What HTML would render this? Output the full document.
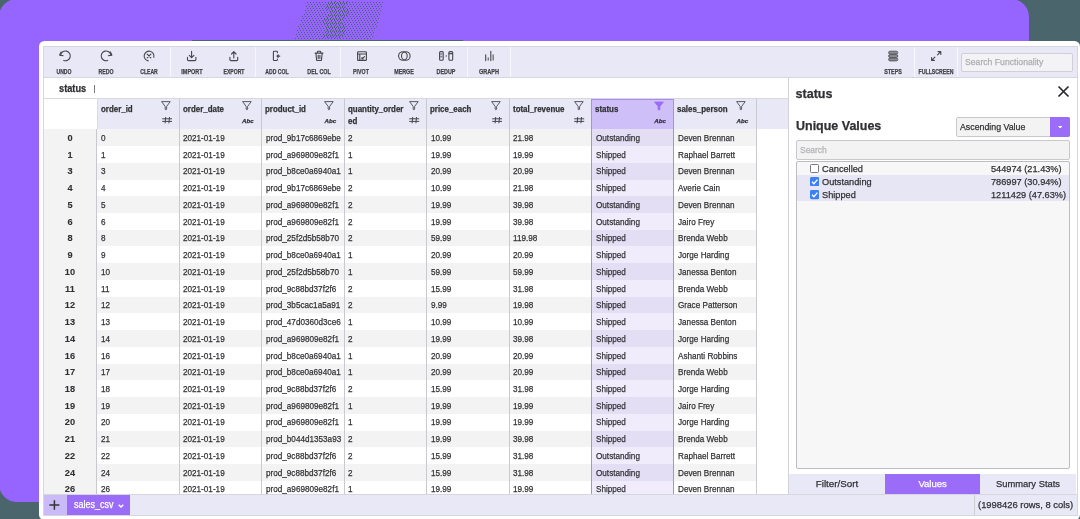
<!DOCTYPE html><html><head><meta charset="utf-8"><style>
*{margin:0;padding:0;box-sizing:border-box}
html,body{width:1080px;height:519px;overflow:hidden;background:#4a656c;font-family:"Liberation Sans",sans-serif;color:#303034}
.a{position:absolute}
.t{position:absolute;white-space:nowrap;transform-origin:0 0;-webkit-text-stroke:0.25px currentColor}
</style></head><body><div style="position:absolute;left:0;top:0;width:1080px;height:519px;overflow:hidden;will-change:transform"><div class="a" style="left:-1px;top:-1px;width:1029.7px;height:502.6px;border-radius:18px;background:#9664ff"></div>
<svg class="a" style="left:285.00px;top:0.00px" width="105" height="42" viewBox="0 0 105 42"><defs><pattern id="dots" x="0" y="0" width="6" height="6" patternUnits="userSpaceOnUse"><g fill="#4a656c"><rect x="0" y="0" width="1" height="1"/><rect x="3" y="0" width="1" height="1"/><rect x="1" y="2" width="1" height="1"/><rect x="4" y="2" width="1" height="1"/><rect x="2" y="4" width="1" height="1"/><rect x="5" y="4" width="1" height="1"/></g></pattern><pattern id="dots2" x="0" y="0" width="4" height="4" patternUnits="userSpaceOnUse"><g fill="#4a656c"><rect x="2" y="1" width="1" height="1"/><rect x="1" y="3" width="1" height="1"/><rect x="3" y="3" width="1" height="1"/></g></pattern></defs><path d="M10 39 L12 30 L18 14 L23 1 L99 1 L96 12 L92 26 L87 39 Z" fill="url(#dots)" shape-rendering="crispEdges"/><path d="M36 39 L42 30 L37 22 L44 12 L40 6 L45 0 L66 0 L60 6 L65 12 L57 22 L62 30 L56 39 Z" fill="url(#dots2)" shape-rendering="crispEdges"/></svg>
<div class="a" style="left:192.00px;top:40.00px;width:271.00px;height:1.00px;background:#4a656c"></div>
<div class="a" style="left:39.2px;top:41px;width:1041.3px;height:479px;border-radius:5.5px;background:#fff"></div>
<div class="a" style="left:43.00px;top:46.00px;width:1034.50px;height:469.80px;background:#fff;border:1px solid #d6d6de"></div>
<div class="a" style="left:44.00px;top:47.00px;width:1032.50px;height:30.70px;background:#e8e8f6"></div>
<div class="a" style="left:44.00px;top:77.20px;width:1032.50px;height:1.00px;background:#d6d6de"></div>
<svg class="a" style="left:0;top:0" width="1080" height="80" viewBox="0 0 1080 80"><path d="M60.67 55.01 A4.85 4.85 0 1 1 63.79 60.41" fill="none" stroke="#46464c" stroke-width="1.1" stroke-linecap="round" stroke-linejoin="round"/><path d="M61.1 51.9 L59.6 55.1 L63.2 55.7" fill="none" stroke="#46464c" stroke-width="1.1" stroke-linecap="round" stroke-linejoin="round"/><path d="M110.83 55.01 A4.85 4.85 0 1 0 107.71 60.41" fill="none" stroke="#46464c" stroke-width="1.1" stroke-linecap="round" stroke-linejoin="round"/><path d="M110.4 51.9 L111.9 55.1 L108.3 55.7" fill="none" stroke="#46464c" stroke-width="1.1" stroke-linecap="round" stroke-linejoin="round"/><path d="M153.78 57.32 A4.9 4.9 0 1 0 148.2 60.88" fill="none" stroke="#46464c" stroke-width="1.1" stroke-linecap="round" stroke-linejoin="round"/><path d="M147.2 54.2 L150.9 57.9 M150.9 54.2 L147.2 57.9" fill="none" stroke="#46464c" stroke-width="1.1" stroke-linecap="round" stroke-linejoin="round"/><path d="M191.6 51.4 V57.7 M189.3 55.4 L191.6 57.7 L193.9 55.4 M187.5 57.2 V59.6 Q187.5 60.6 188.5 60.6 H194.9 Q195.9 60.6 195.9 59.6 V57.2" fill="none" stroke="#46464c" stroke-width="1.1" stroke-linecap="round" stroke-linejoin="round"/><path d="M233.8 51.8 V58 M231.5 54 L233.8 51.6 L236.1 54 M229.9 57.2 V59.6 Q229.9 60.6 230.9 60.6 H236.7 Q237.7 60.6 237.7 59.6 V57.2" fill="none" stroke="#46464c" stroke-width="1.1" stroke-linecap="round" stroke-linejoin="round"/><path d="M277.4 52.8 V52 Q277.4 51.3 276.7 51.3 H274.1 Q273.4 51.3 273.4 52 V59.8 Q273.4 60.5 274.1 60.5 H276.7 Q277.4 60.5 277.4 59.8 V59" fill="none" stroke="#46464c" stroke-width="1.1" stroke-linecap="round" stroke-linejoin="round"/><path d="M276.9 56.1 H279.8 M278.2 54.8 L276.9 56.1 L278.2 57.4" fill="none" stroke="#46464c" stroke-width="1.1" stroke-linecap="round" stroke-linejoin="round"/><path d="M315.1 53.1 H323 M317.4 53.1 V52 Q317.4 51.3 318.1 51.3 H320 Q320.7 51.3 320.7 52 V53.1 M315.9 53.1 L316.6 59.8 Q316.7 60.5 317.4 60.5 H320.7 Q321.4 60.5 321.5 59.8 L322.2 53.1 M318.2 55.2 V58.6 M319.9 55.2 V58.6" fill="none" stroke="#46464c" stroke-width="1.1" stroke-linecap="round" stroke-linejoin="round"/><rect x="357.6" y="51.8" width="8.8" height="8.6" rx="0.7" fill="none" stroke="#46464c" stroke-width="1.1" stroke-linecap="round" stroke-linejoin="round"/><path d="M357.6 54 H366.4 M359.8 54 V60.4 M361.9 59 L364.5 56.6 M361.9 57.6 V59 H363.3" fill="none" stroke="#46464c" stroke-width="1.1" stroke-linecap="round" stroke-linejoin="round"/><circle cx="402.9" cy="56" r="4.3" fill="none" stroke="#46464c" stroke-width="1.1" stroke-linecap="round" stroke-linejoin="round"/><circle cx="405.8" cy="56" r="4.3" fill="none" stroke="#46464c" stroke-width="1.1" stroke-linecap="round" stroke-linejoin="round"/><rect x="439.6" y="51.6" width="3.6" height="8.7" rx="1" fill="none" stroke="#46464c" stroke-width="1.1" stroke-linecap="round" stroke-linejoin="round"/><path d="M440 54 H442.8 M440 56.6 H442.8" stroke="#8a8a90" stroke-width="1.6"/><circle cx="446.2" cy="56" r="0.7" fill="#46464c"/><rect x="448.9" y="51.6" width="3.8" height="8.7" rx="1" fill="none" stroke="#46464c" stroke-width="1.1" stroke-linecap="round" stroke-linejoin="round"/><path d="M449.2 53.6 H452.4" fill="none" stroke="#46464c" stroke-width="1.1" stroke-linecap="round" stroke-linejoin="round"/><path d="M485.7 54.8 V60.6 M490.8 51.3 V60.6" fill="none" stroke="#46464c" stroke-width="1.1" stroke-linecap="round" stroke-linejoin="round"/><path d="M488.3 57.4 V60.6 M493.2 54.6 V60.6" stroke="#7a7a80" stroke-width="1.5" fill="none"/><rect x="888.6" y="51.2" width="9.2" height="2.9" rx="1.45" fill="#8a8a90" stroke="#55555a" stroke-width="0.9"/><rect x="888.6" y="54.6" width="9.2" height="2.9" rx="1.45" fill="#8a8a90" stroke="#55555a" stroke-width="0.9"/><rect x="888.6" y="58" width="9.2" height="2.9" rx="1.45" fill="#8a8a90" stroke="#55555a" stroke-width="0.9"/><path d="M931.6 60.4 L934.9 57.1 M931.6 57.6 V60.4 H934.4 M940.8 51.6 L937.5 54.9 M938 51.6 H940.8 V54.4" fill="none" stroke="#46464c" stroke-width="1.1" stroke-linecap="round" stroke-linejoin="round"/></svg>
<div class="t" style="left:24.15px;top:67.52px;width:80px;text-align:center;font-size:7.3px;line-height:7.3px;transform-origin:50% 0;font-weight:bold;color:#404046;transform:scaleX(0.7)">UNDO</div>
<div class="t" style="left:66.45px;top:67.52px;width:80px;text-align:center;font-size:7.3px;line-height:7.3px;transform-origin:50% 0;font-weight:bold;color:#404046;transform:scaleX(0.71)">REDO</div>
<div class="t" style="left:108.95px;top:67.52px;width:80px;text-align:center;font-size:7.3px;line-height:7.3px;transform-origin:50% 0;font-weight:bold;color:#404046;transform:scaleX(0.7)">CLEAR</div>
<div class="t" style="left:151.65px;top:67.52px;width:80px;text-align:center;font-size:7.3px;line-height:7.3px;transform-origin:50% 0;font-weight:bold;color:#404046;transform:scaleX(0.75)">IMPORT</div>
<div class="t" style="left:194.25px;top:67.52px;width:80px;text-align:center;font-size:7.3px;line-height:7.3px;transform-origin:50% 0;font-weight:bold;color:#404046;transform:scaleX(0.7)">EXPORT</div>
<div class="t" style="left:236.75px;top:67.52px;width:80px;text-align:center;font-size:7.3px;line-height:7.3px;transform-origin:50% 0;font-weight:bold;color:#404046;transform:scaleX(0.705)">ADD COL</div>
<div class="t" style="left:279.10px;top:67.52px;width:80px;text-align:center;font-size:7.3px;line-height:7.3px;transform-origin:50% 0;font-weight:bold;color:#404046;transform:scaleX(0.73)">DEL COL</div>
<div class="t" style="left:321.40px;top:67.52px;width:80px;text-align:center;font-size:7.3px;line-height:7.3px;transform-origin:50% 0;font-weight:bold;color:#404046;transform:scaleX(0.72)">PIVOT</div>
<div class="t" style="left:363.80px;top:67.52px;width:80px;text-align:center;font-size:7.3px;line-height:7.3px;transform-origin:50% 0;font-weight:bold;color:#404046;transform:scaleX(0.735)">MERGE</div>
<div class="t" style="left:406.25px;top:67.52px;width:80px;text-align:center;font-size:7.3px;line-height:7.3px;transform-origin:50% 0;font-weight:bold;color:#404046;transform:scaleX(0.735)">DEDUP</div>
<div class="t" style="left:449.05px;top:67.52px;width:80px;text-align:center;font-size:7.3px;line-height:7.3px;transform-origin:50% 0;font-weight:bold;color:#404046;transform:scaleX(0.76)">GRAPH</div>
<div class="t" style="left:853.20px;top:67.52px;width:80px;text-align:center;font-size:7.3px;line-height:7.3px;transform-origin:50% 0;font-weight:bold;color:#404046;transform:scaleX(0.74)">STEPS</div>
<div class="t" style="left:895.95px;top:67.52px;width:80px;text-align:center;font-size:7.3px;line-height:7.3px;transform-origin:50% 0;font-weight:bold;color:#404046;transform:scaleX(0.712)">FULLSCREEN</div>
<div class="a" style="left:169.80px;top:47.00px;width:1.00px;height:30.20px;background:#f8f8fc"></div>
<div class="a" style="left:255.00px;top:47.00px;width:1.00px;height:30.20px;background:#f8f8fc"></div>
<div class="a" style="left:339.70px;top:47.00px;width:1.00px;height:30.20px;background:#f8f8fc"></div>
<div class="a" style="left:467.00px;top:47.00px;width:1.00px;height:30.20px;background:#f8f8fc"></div>
<div class="a" style="left:510.10px;top:47.00px;width:1.00px;height:30.20px;background:#f8f8fc"></div>
<div class="a" style="left:913.90px;top:47.00px;width:1.00px;height:30.20px;background:#f8f8fc"></div>
<div class="a" style="left:957.00px;top:47.00px;width:1.00px;height:30.20px;background:#f8f8fc"></div>
<div class="a" style="left:961.30px;top:52.50px;width:111.50px;height:19.30px;background:#f3f3f5;border:1px solid #cfcfd4;border-radius:2px"></div>
<div class="t" style="left:964.60px;top:57.26px;font-size:9.5px;line-height:9.5px;color:#acacb0;transform:scaleX(0.91)">Search Functionality</div>
<div class="t" style="left:58.70px;top:82.89px;font-size:11px;line-height:11px;font-weight:bold;transform:scaleX(0.84)">status</div>
<div class="a" style="left:93.60px;top:85.00px;width:1.00px;height:8.00px;background:#7a7a7e"></div>
<div class="a" style="left:44.00px;top:98.30px;width:744.20px;height:1.00px;background:#d8d8de"></div>
<div class="a" style="left:97.00px;top:99.30px;width:691.20px;height:30.00px;background:#e8e8f6"></div>
<div class="a" style="left:44.00px;top:129.30px;width:53.00px;height:16.74px;background:#f3f3f3"></div>
<div class="a" style="left:97.00px;top:129.30px;width:82.30px;height:16.74px;background:#f3f3f3"></div>
<div class="a" style="left:179.30px;top:129.30px;width:82.40px;height:16.74px;background:#f3f3f3"></div>
<div class="a" style="left:261.70px;top:129.30px;width:82.50px;height:16.74px;background:#f3f3f3"></div>
<div class="a" style="left:344.20px;top:129.30px;width:82.50px;height:16.74px;background:#f3f3f3"></div>
<div class="a" style="left:426.70px;top:129.30px;width:82.50px;height:16.74px;background:#f3f3f3"></div>
<div class="a" style="left:509.20px;top:129.30px;width:82.40px;height:16.74px;background:#f3f3f3"></div>
<div class="a" style="left:591.60px;top:129.30px;width:82.20px;height:16.74px;background:#e3def4"></div>
<div class="a" style="left:673.80px;top:129.30px;width:82.40px;height:16.74px;background:#f3f3f3"></div>
<div class="a" style="left:44.00px;top:146.04px;width:53.00px;height:16.74px;background:#f3f3f3"></div>
<div class="a" style="left:97.00px;top:146.04px;width:82.30px;height:16.74px;background:#ffffff"></div>
<div class="a" style="left:179.30px;top:146.04px;width:82.40px;height:16.74px;background:#ffffff"></div>
<div class="a" style="left:261.70px;top:146.04px;width:82.50px;height:16.74px;background:#ffffff"></div>
<div class="a" style="left:344.20px;top:146.04px;width:82.50px;height:16.74px;background:#ffffff"></div>
<div class="a" style="left:426.70px;top:146.04px;width:82.50px;height:16.74px;background:#ffffff"></div>
<div class="a" style="left:509.20px;top:146.04px;width:82.40px;height:16.74px;background:#ffffff"></div>
<div class="a" style="left:591.60px;top:146.04px;width:82.20px;height:16.74px;background:#f0ecfb"></div>
<div class="a" style="left:673.80px;top:146.04px;width:82.40px;height:16.74px;background:#ffffff"></div>
<div class="a" style="left:44.00px;top:162.78px;width:53.00px;height:16.74px;background:#f3f3f3"></div>
<div class="a" style="left:97.00px;top:162.78px;width:82.30px;height:16.74px;background:#f3f3f3"></div>
<div class="a" style="left:179.30px;top:162.78px;width:82.40px;height:16.74px;background:#f3f3f3"></div>
<div class="a" style="left:261.70px;top:162.78px;width:82.50px;height:16.74px;background:#f3f3f3"></div>
<div class="a" style="left:344.20px;top:162.78px;width:82.50px;height:16.74px;background:#f3f3f3"></div>
<div class="a" style="left:426.70px;top:162.78px;width:82.50px;height:16.74px;background:#f3f3f3"></div>
<div class="a" style="left:509.20px;top:162.78px;width:82.40px;height:16.74px;background:#f3f3f3"></div>
<div class="a" style="left:591.60px;top:162.78px;width:82.20px;height:16.74px;background:#e3def4"></div>
<div class="a" style="left:673.80px;top:162.78px;width:82.40px;height:16.74px;background:#f3f3f3"></div>
<div class="a" style="left:44.00px;top:179.52px;width:53.00px;height:16.74px;background:#f3f3f3"></div>
<div class="a" style="left:97.00px;top:179.52px;width:82.30px;height:16.74px;background:#ffffff"></div>
<div class="a" style="left:179.30px;top:179.52px;width:82.40px;height:16.74px;background:#ffffff"></div>
<div class="a" style="left:261.70px;top:179.52px;width:82.50px;height:16.74px;background:#ffffff"></div>
<div class="a" style="left:344.20px;top:179.52px;width:82.50px;height:16.74px;background:#ffffff"></div>
<div class="a" style="left:426.70px;top:179.52px;width:82.50px;height:16.74px;background:#ffffff"></div>
<div class="a" style="left:509.20px;top:179.52px;width:82.40px;height:16.74px;background:#ffffff"></div>
<div class="a" style="left:591.60px;top:179.52px;width:82.20px;height:16.74px;background:#f0ecfb"></div>
<div class="a" style="left:673.80px;top:179.52px;width:82.40px;height:16.74px;background:#ffffff"></div>
<div class="a" style="left:44.00px;top:196.26px;width:53.00px;height:16.74px;background:#f3f3f3"></div>
<div class="a" style="left:97.00px;top:196.26px;width:82.30px;height:16.74px;background:#f3f3f3"></div>
<div class="a" style="left:179.30px;top:196.26px;width:82.40px;height:16.74px;background:#f3f3f3"></div>
<div class="a" style="left:261.70px;top:196.26px;width:82.50px;height:16.74px;background:#f3f3f3"></div>
<div class="a" style="left:344.20px;top:196.26px;width:82.50px;height:16.74px;background:#f3f3f3"></div>
<div class="a" style="left:426.70px;top:196.26px;width:82.50px;height:16.74px;background:#f3f3f3"></div>
<div class="a" style="left:509.20px;top:196.26px;width:82.40px;height:16.74px;background:#f3f3f3"></div>
<div class="a" style="left:591.60px;top:196.26px;width:82.20px;height:16.74px;background:#e3def4"></div>
<div class="a" style="left:673.80px;top:196.26px;width:82.40px;height:16.74px;background:#f3f3f3"></div>
<div class="a" style="left:44.00px;top:213.00px;width:53.00px;height:16.74px;background:#f3f3f3"></div>
<div class="a" style="left:97.00px;top:213.00px;width:82.30px;height:16.74px;background:#ffffff"></div>
<div class="a" style="left:179.30px;top:213.00px;width:82.40px;height:16.74px;background:#ffffff"></div>
<div class="a" style="left:261.70px;top:213.00px;width:82.50px;height:16.74px;background:#ffffff"></div>
<div class="a" style="left:344.20px;top:213.00px;width:82.50px;height:16.74px;background:#ffffff"></div>
<div class="a" style="left:426.70px;top:213.00px;width:82.50px;height:16.74px;background:#ffffff"></div>
<div class="a" style="left:509.20px;top:213.00px;width:82.40px;height:16.74px;background:#ffffff"></div>
<div class="a" style="left:591.60px;top:213.00px;width:82.20px;height:16.74px;background:#f0ecfb"></div>
<div class="a" style="left:673.80px;top:213.00px;width:82.40px;height:16.74px;background:#ffffff"></div>
<div class="a" style="left:44.00px;top:229.74px;width:53.00px;height:16.74px;background:#f3f3f3"></div>
<div class="a" style="left:97.00px;top:229.74px;width:82.30px;height:16.74px;background:#f3f3f3"></div>
<div class="a" style="left:179.30px;top:229.74px;width:82.40px;height:16.74px;background:#f3f3f3"></div>
<div class="a" style="left:261.70px;top:229.74px;width:82.50px;height:16.74px;background:#f3f3f3"></div>
<div class="a" style="left:344.20px;top:229.74px;width:82.50px;height:16.74px;background:#f3f3f3"></div>
<div class="a" style="left:426.70px;top:229.74px;width:82.50px;height:16.74px;background:#f3f3f3"></div>
<div class="a" style="left:509.20px;top:229.74px;width:82.40px;height:16.74px;background:#f3f3f3"></div>
<div class="a" style="left:591.60px;top:229.74px;width:82.20px;height:16.74px;background:#e3def4"></div>
<div class="a" style="left:673.80px;top:229.74px;width:82.40px;height:16.74px;background:#f3f3f3"></div>
<div class="a" style="left:44.00px;top:246.48px;width:53.00px;height:16.74px;background:#f3f3f3"></div>
<div class="a" style="left:97.00px;top:246.48px;width:82.30px;height:16.74px;background:#ffffff"></div>
<div class="a" style="left:179.30px;top:246.48px;width:82.40px;height:16.74px;background:#ffffff"></div>
<div class="a" style="left:261.70px;top:246.48px;width:82.50px;height:16.74px;background:#ffffff"></div>
<div class="a" style="left:344.20px;top:246.48px;width:82.50px;height:16.74px;background:#ffffff"></div>
<div class="a" style="left:426.70px;top:246.48px;width:82.50px;height:16.74px;background:#ffffff"></div>
<div class="a" style="left:509.20px;top:246.48px;width:82.40px;height:16.74px;background:#ffffff"></div>
<div class="a" style="left:591.60px;top:246.48px;width:82.20px;height:16.74px;background:#f0ecfb"></div>
<div class="a" style="left:673.80px;top:246.48px;width:82.40px;height:16.74px;background:#ffffff"></div>
<div class="a" style="left:44.00px;top:263.22px;width:53.00px;height:16.74px;background:#f3f3f3"></div>
<div class="a" style="left:97.00px;top:263.22px;width:82.30px;height:16.74px;background:#f3f3f3"></div>
<div class="a" style="left:179.30px;top:263.22px;width:82.40px;height:16.74px;background:#f3f3f3"></div>
<div class="a" style="left:261.70px;top:263.22px;width:82.50px;height:16.74px;background:#f3f3f3"></div>
<div class="a" style="left:344.20px;top:263.22px;width:82.50px;height:16.74px;background:#f3f3f3"></div>
<div class="a" style="left:426.70px;top:263.22px;width:82.50px;height:16.74px;background:#f3f3f3"></div>
<div class="a" style="left:509.20px;top:263.22px;width:82.40px;height:16.74px;background:#f3f3f3"></div>
<div class="a" style="left:591.60px;top:263.22px;width:82.20px;height:16.74px;background:#e3def4"></div>
<div class="a" style="left:673.80px;top:263.22px;width:82.40px;height:16.74px;background:#f3f3f3"></div>
<div class="a" style="left:44.00px;top:279.96px;width:53.00px;height:16.74px;background:#f3f3f3"></div>
<div class="a" style="left:97.00px;top:279.96px;width:82.30px;height:16.74px;background:#ffffff"></div>
<div class="a" style="left:179.30px;top:279.96px;width:82.40px;height:16.74px;background:#ffffff"></div>
<div class="a" style="left:261.70px;top:279.96px;width:82.50px;height:16.74px;background:#ffffff"></div>
<div class="a" style="left:344.20px;top:279.96px;width:82.50px;height:16.74px;background:#ffffff"></div>
<div class="a" style="left:426.70px;top:279.96px;width:82.50px;height:16.74px;background:#ffffff"></div>
<div class="a" style="left:509.20px;top:279.96px;width:82.40px;height:16.74px;background:#ffffff"></div>
<div class="a" style="left:591.60px;top:279.96px;width:82.20px;height:16.74px;background:#f0ecfb"></div>
<div class="a" style="left:673.80px;top:279.96px;width:82.40px;height:16.74px;background:#ffffff"></div>
<div class="a" style="left:44.00px;top:296.70px;width:53.00px;height:16.74px;background:#f3f3f3"></div>
<div class="a" style="left:97.00px;top:296.70px;width:82.30px;height:16.74px;background:#f3f3f3"></div>
<div class="a" style="left:179.30px;top:296.70px;width:82.40px;height:16.74px;background:#f3f3f3"></div>
<div class="a" style="left:261.70px;top:296.70px;width:82.50px;height:16.74px;background:#f3f3f3"></div>
<div class="a" style="left:344.20px;top:296.70px;width:82.50px;height:16.74px;background:#f3f3f3"></div>
<div class="a" style="left:426.70px;top:296.70px;width:82.50px;height:16.74px;background:#f3f3f3"></div>
<div class="a" style="left:509.20px;top:296.70px;width:82.40px;height:16.74px;background:#f3f3f3"></div>
<div class="a" style="left:591.60px;top:296.70px;width:82.20px;height:16.74px;background:#e3def4"></div>
<div class="a" style="left:673.80px;top:296.70px;width:82.40px;height:16.74px;background:#f3f3f3"></div>
<div class="a" style="left:44.00px;top:313.44px;width:53.00px;height:16.74px;background:#f3f3f3"></div>
<div class="a" style="left:97.00px;top:313.44px;width:82.30px;height:16.74px;background:#ffffff"></div>
<div class="a" style="left:179.30px;top:313.44px;width:82.40px;height:16.74px;background:#ffffff"></div>
<div class="a" style="left:261.70px;top:313.44px;width:82.50px;height:16.74px;background:#ffffff"></div>
<div class="a" style="left:344.20px;top:313.44px;width:82.50px;height:16.74px;background:#ffffff"></div>
<div class="a" style="left:426.70px;top:313.44px;width:82.50px;height:16.74px;background:#ffffff"></div>
<div class="a" style="left:509.20px;top:313.44px;width:82.40px;height:16.74px;background:#ffffff"></div>
<div class="a" style="left:591.60px;top:313.44px;width:82.20px;height:16.74px;background:#f0ecfb"></div>
<div class="a" style="left:673.80px;top:313.44px;width:82.40px;height:16.74px;background:#ffffff"></div>
<div class="a" style="left:44.00px;top:330.18px;width:53.00px;height:16.74px;background:#f3f3f3"></div>
<div class="a" style="left:97.00px;top:330.18px;width:82.30px;height:16.74px;background:#f3f3f3"></div>
<div class="a" style="left:179.30px;top:330.18px;width:82.40px;height:16.74px;background:#f3f3f3"></div>
<div class="a" style="left:261.70px;top:330.18px;width:82.50px;height:16.74px;background:#f3f3f3"></div>
<div class="a" style="left:344.20px;top:330.18px;width:82.50px;height:16.74px;background:#f3f3f3"></div>
<div class="a" style="left:426.70px;top:330.18px;width:82.50px;height:16.74px;background:#f3f3f3"></div>
<div class="a" style="left:509.20px;top:330.18px;width:82.40px;height:16.74px;background:#f3f3f3"></div>
<div class="a" style="left:591.60px;top:330.18px;width:82.20px;height:16.74px;background:#e3def4"></div>
<div class="a" style="left:673.80px;top:330.18px;width:82.40px;height:16.74px;background:#f3f3f3"></div>
<div class="a" style="left:44.00px;top:346.92px;width:53.00px;height:16.74px;background:#f3f3f3"></div>
<div class="a" style="left:97.00px;top:346.92px;width:82.30px;height:16.74px;background:#ffffff"></div>
<div class="a" style="left:179.30px;top:346.92px;width:82.40px;height:16.74px;background:#ffffff"></div>
<div class="a" style="left:261.70px;top:346.92px;width:82.50px;height:16.74px;background:#ffffff"></div>
<div class="a" style="left:344.20px;top:346.92px;width:82.50px;height:16.74px;background:#ffffff"></div>
<div class="a" style="left:426.70px;top:346.92px;width:82.50px;height:16.74px;background:#ffffff"></div>
<div class="a" style="left:509.20px;top:346.92px;width:82.40px;height:16.74px;background:#ffffff"></div>
<div class="a" style="left:591.60px;top:346.92px;width:82.20px;height:16.74px;background:#f0ecfb"></div>
<div class="a" style="left:673.80px;top:346.92px;width:82.40px;height:16.74px;background:#ffffff"></div>
<div class="a" style="left:44.00px;top:363.66px;width:53.00px;height:16.74px;background:#f3f3f3"></div>
<div class="a" style="left:97.00px;top:363.66px;width:82.30px;height:16.74px;background:#f3f3f3"></div>
<div class="a" style="left:179.30px;top:363.66px;width:82.40px;height:16.74px;background:#f3f3f3"></div>
<div class="a" style="left:261.70px;top:363.66px;width:82.50px;height:16.74px;background:#f3f3f3"></div>
<div class="a" style="left:344.20px;top:363.66px;width:82.50px;height:16.74px;background:#f3f3f3"></div>
<div class="a" style="left:426.70px;top:363.66px;width:82.50px;height:16.74px;background:#f3f3f3"></div>
<div class="a" style="left:509.20px;top:363.66px;width:82.40px;height:16.74px;background:#f3f3f3"></div>
<div class="a" style="left:591.60px;top:363.66px;width:82.20px;height:16.74px;background:#e3def4"></div>
<div class="a" style="left:673.80px;top:363.66px;width:82.40px;height:16.74px;background:#f3f3f3"></div>
<div class="a" style="left:44.00px;top:380.40px;width:53.00px;height:16.74px;background:#f3f3f3"></div>
<div class="a" style="left:97.00px;top:380.40px;width:82.30px;height:16.74px;background:#ffffff"></div>
<div class="a" style="left:179.30px;top:380.40px;width:82.40px;height:16.74px;background:#ffffff"></div>
<div class="a" style="left:261.70px;top:380.40px;width:82.50px;height:16.74px;background:#ffffff"></div>
<div class="a" style="left:344.20px;top:380.40px;width:82.50px;height:16.74px;background:#ffffff"></div>
<div class="a" style="left:426.70px;top:380.40px;width:82.50px;height:16.74px;background:#ffffff"></div>
<div class="a" style="left:509.20px;top:380.40px;width:82.40px;height:16.74px;background:#ffffff"></div>
<div class="a" style="left:591.60px;top:380.40px;width:82.20px;height:16.74px;background:#f0ecfb"></div>
<div class="a" style="left:673.80px;top:380.40px;width:82.40px;height:16.74px;background:#ffffff"></div>
<div class="a" style="left:44.00px;top:397.14px;width:53.00px;height:16.74px;background:#f3f3f3"></div>
<div class="a" style="left:97.00px;top:397.14px;width:82.30px;height:16.74px;background:#f3f3f3"></div>
<div class="a" style="left:179.30px;top:397.14px;width:82.40px;height:16.74px;background:#f3f3f3"></div>
<div class="a" style="left:261.70px;top:397.14px;width:82.50px;height:16.74px;background:#f3f3f3"></div>
<div class="a" style="left:344.20px;top:397.14px;width:82.50px;height:16.74px;background:#f3f3f3"></div>
<div class="a" style="left:426.70px;top:397.14px;width:82.50px;height:16.74px;background:#f3f3f3"></div>
<div class="a" style="left:509.20px;top:397.14px;width:82.40px;height:16.74px;background:#f3f3f3"></div>
<div class="a" style="left:591.60px;top:397.14px;width:82.20px;height:16.74px;background:#e3def4"></div>
<div class="a" style="left:673.80px;top:397.14px;width:82.40px;height:16.74px;background:#f3f3f3"></div>
<div class="a" style="left:44.00px;top:413.88px;width:53.00px;height:16.74px;background:#f3f3f3"></div>
<div class="a" style="left:97.00px;top:413.88px;width:82.30px;height:16.74px;background:#ffffff"></div>
<div class="a" style="left:179.30px;top:413.88px;width:82.40px;height:16.74px;background:#ffffff"></div>
<div class="a" style="left:261.70px;top:413.88px;width:82.50px;height:16.74px;background:#ffffff"></div>
<div class="a" style="left:344.20px;top:413.88px;width:82.50px;height:16.74px;background:#ffffff"></div>
<div class="a" style="left:426.70px;top:413.88px;width:82.50px;height:16.74px;background:#ffffff"></div>
<div class="a" style="left:509.20px;top:413.88px;width:82.40px;height:16.74px;background:#ffffff"></div>
<div class="a" style="left:591.60px;top:413.88px;width:82.20px;height:16.74px;background:#f0ecfb"></div>
<div class="a" style="left:673.80px;top:413.88px;width:82.40px;height:16.74px;background:#ffffff"></div>
<div class="a" style="left:44.00px;top:430.62px;width:53.00px;height:16.74px;background:#f3f3f3"></div>
<div class="a" style="left:97.00px;top:430.62px;width:82.30px;height:16.74px;background:#f3f3f3"></div>
<div class="a" style="left:179.30px;top:430.62px;width:82.40px;height:16.74px;background:#f3f3f3"></div>
<div class="a" style="left:261.70px;top:430.62px;width:82.50px;height:16.74px;background:#f3f3f3"></div>
<div class="a" style="left:344.20px;top:430.62px;width:82.50px;height:16.74px;background:#f3f3f3"></div>
<div class="a" style="left:426.70px;top:430.62px;width:82.50px;height:16.74px;background:#f3f3f3"></div>
<div class="a" style="left:509.20px;top:430.62px;width:82.40px;height:16.74px;background:#f3f3f3"></div>
<div class="a" style="left:591.60px;top:430.62px;width:82.20px;height:16.74px;background:#e3def4"></div>
<div class="a" style="left:673.80px;top:430.62px;width:82.40px;height:16.74px;background:#f3f3f3"></div>
<div class="a" style="left:44.00px;top:447.36px;width:53.00px;height:16.74px;background:#f3f3f3"></div>
<div class="a" style="left:97.00px;top:447.36px;width:82.30px;height:16.74px;background:#ffffff"></div>
<div class="a" style="left:179.30px;top:447.36px;width:82.40px;height:16.74px;background:#ffffff"></div>
<div class="a" style="left:261.70px;top:447.36px;width:82.50px;height:16.74px;background:#ffffff"></div>
<div class="a" style="left:344.20px;top:447.36px;width:82.50px;height:16.74px;background:#ffffff"></div>
<div class="a" style="left:426.70px;top:447.36px;width:82.50px;height:16.74px;background:#ffffff"></div>
<div class="a" style="left:509.20px;top:447.36px;width:82.40px;height:16.74px;background:#ffffff"></div>
<div class="a" style="left:591.60px;top:447.36px;width:82.20px;height:16.74px;background:#f0ecfb"></div>
<div class="a" style="left:673.80px;top:447.36px;width:82.40px;height:16.74px;background:#ffffff"></div>
<div class="a" style="left:44.00px;top:464.10px;width:53.00px;height:16.74px;background:#f3f3f3"></div>
<div class="a" style="left:97.00px;top:464.10px;width:82.30px;height:16.74px;background:#f3f3f3"></div>
<div class="a" style="left:179.30px;top:464.10px;width:82.40px;height:16.74px;background:#f3f3f3"></div>
<div class="a" style="left:261.70px;top:464.10px;width:82.50px;height:16.74px;background:#f3f3f3"></div>
<div class="a" style="left:344.20px;top:464.10px;width:82.50px;height:16.74px;background:#f3f3f3"></div>
<div class="a" style="left:426.70px;top:464.10px;width:82.50px;height:16.74px;background:#f3f3f3"></div>
<div class="a" style="left:509.20px;top:464.10px;width:82.40px;height:16.74px;background:#f3f3f3"></div>
<div class="a" style="left:591.60px;top:464.10px;width:82.20px;height:16.74px;background:#e3def4"></div>
<div class="a" style="left:673.80px;top:464.10px;width:82.40px;height:16.74px;background:#f3f3f3"></div>
<div class="a" style="left:44.00px;top:480.84px;width:53.00px;height:13.46px;background:#f3f3f3"></div>
<div class="a" style="left:97.00px;top:480.84px;width:82.30px;height:13.46px;background:#ffffff"></div>
<div class="a" style="left:179.30px;top:480.84px;width:82.40px;height:13.46px;background:#ffffff"></div>
<div class="a" style="left:261.70px;top:480.84px;width:82.50px;height:13.46px;background:#ffffff"></div>
<div class="a" style="left:344.20px;top:480.84px;width:82.50px;height:13.46px;background:#ffffff"></div>
<div class="a" style="left:426.70px;top:480.84px;width:82.50px;height:13.46px;background:#ffffff"></div>
<div class="a" style="left:509.20px;top:480.84px;width:82.40px;height:13.46px;background:#ffffff"></div>
<div class="a" style="left:591.60px;top:480.84px;width:82.20px;height:13.46px;background:#f0ecfb"></div>
<div class="a" style="left:673.80px;top:480.84px;width:82.40px;height:13.46px;background:#ffffff"></div>
<div class="a" style="left:44px;top:129.3px;width:744.2px;height:365.0px;overflow:hidden">
<div class="t" style="left:6.00px;top:3.60px;width:40px;text-align:center;font-size:9.8px;line-height:9.8px;transform-origin:50% 0;font-weight:bold;transform:scaleX(0.94);-webkit-text-stroke:0.1px currentColor">0</div>
<div class="t" style="left:57.00px;top:3.62px;font-size:9.9px;line-height:9.9px;transform:scaleX(0.825)">0</div>
<div class="t" style="left:139.30px;top:3.62px;font-size:9.9px;line-height:9.9px;transform:scaleX(0.825)">2021-01-19</div>
<div class="t" style="left:221.70px;top:3.62px;font-size:9.9px;line-height:9.9px;transform:scaleX(0.825)">prod_9b17c6869ebe</div>
<div class="t" style="left:304.20px;top:3.62px;font-size:9.9px;line-height:9.9px;transform:scaleX(0.825)">2</div>
<div class="t" style="left:386.70px;top:3.62px;font-size:9.9px;line-height:9.9px;transform:scaleX(0.825)">10.99</div>
<div class="t" style="left:469.20px;top:3.62px;font-size:9.9px;line-height:9.9px;transform:scaleX(0.825)">21.98</div>
<div class="t" style="left:551.60px;top:3.62px;font-size:9.9px;line-height:9.9px;transform:scaleX(0.825)">Outstanding</div>
<div class="t" style="left:633.80px;top:3.62px;font-size:9.9px;line-height:9.9px;transform:scaleX(0.825)">Deven Brennan</div>
<div class="t" style="left:6.00px;top:20.34px;width:40px;text-align:center;font-size:9.8px;line-height:9.8px;transform-origin:50% 0;font-weight:bold;transform:scaleX(0.94);-webkit-text-stroke:0.1px currentColor">1</div>
<div class="t" style="left:57.00px;top:20.36px;font-size:9.9px;line-height:9.9px;transform:scaleX(0.825)">1</div>
<div class="t" style="left:139.30px;top:20.36px;font-size:9.9px;line-height:9.9px;transform:scaleX(0.825)">2021-01-19</div>
<div class="t" style="left:221.70px;top:20.36px;font-size:9.9px;line-height:9.9px;transform:scaleX(0.825)">prod_a969809e82f1</div>
<div class="t" style="left:304.20px;top:20.36px;font-size:9.9px;line-height:9.9px;transform:scaleX(0.825)">1</div>
<div class="t" style="left:386.70px;top:20.36px;font-size:9.9px;line-height:9.9px;transform:scaleX(0.825)">19.99</div>
<div class="t" style="left:469.20px;top:20.36px;font-size:9.9px;line-height:9.9px;transform:scaleX(0.825)">19.99</div>
<div class="t" style="left:551.60px;top:20.36px;font-size:9.9px;line-height:9.9px;transform:scaleX(0.825)">Shipped</div>
<div class="t" style="left:633.80px;top:20.36px;font-size:9.9px;line-height:9.9px;transform:scaleX(0.825)">Raphael Barrett</div>
<div class="t" style="left:6.00px;top:37.08px;width:40px;text-align:center;font-size:9.8px;line-height:9.8px;transform-origin:50% 0;font-weight:bold;transform:scaleX(0.94);-webkit-text-stroke:0.1px currentColor">3</div>
<div class="t" style="left:57.00px;top:37.10px;font-size:9.9px;line-height:9.9px;transform:scaleX(0.825)">3</div>
<div class="t" style="left:139.30px;top:37.10px;font-size:9.9px;line-height:9.9px;transform:scaleX(0.825)">2021-01-19</div>
<div class="t" style="left:221.70px;top:37.10px;font-size:9.9px;line-height:9.9px;transform:scaleX(0.825)">prod_b8ce0a6940a1</div>
<div class="t" style="left:304.20px;top:37.10px;font-size:9.9px;line-height:9.9px;transform:scaleX(0.825)">1</div>
<div class="t" style="left:386.70px;top:37.10px;font-size:9.9px;line-height:9.9px;transform:scaleX(0.825)">20.99</div>
<div class="t" style="left:469.20px;top:37.10px;font-size:9.9px;line-height:9.9px;transform:scaleX(0.825)">20.99</div>
<div class="t" style="left:551.60px;top:37.10px;font-size:9.9px;line-height:9.9px;transform:scaleX(0.825)">Shipped</div>
<div class="t" style="left:633.80px;top:37.10px;font-size:9.9px;line-height:9.9px;transform:scaleX(0.825)">Deven Brennan</div>
<div class="t" style="left:6.00px;top:53.82px;width:40px;text-align:center;font-size:9.8px;line-height:9.8px;transform-origin:50% 0;font-weight:bold;transform:scaleX(0.94);-webkit-text-stroke:0.1px currentColor">4</div>
<div class="t" style="left:57.00px;top:53.84px;font-size:9.9px;line-height:9.9px;transform:scaleX(0.825)">4</div>
<div class="t" style="left:139.30px;top:53.84px;font-size:9.9px;line-height:9.9px;transform:scaleX(0.825)">2021-01-19</div>
<div class="t" style="left:221.70px;top:53.84px;font-size:9.9px;line-height:9.9px;transform:scaleX(0.825)">prod_9b17c6869ebe</div>
<div class="t" style="left:304.20px;top:53.84px;font-size:9.9px;line-height:9.9px;transform:scaleX(0.825)">2</div>
<div class="t" style="left:386.70px;top:53.84px;font-size:9.9px;line-height:9.9px;transform:scaleX(0.825)">10.99</div>
<div class="t" style="left:469.20px;top:53.84px;font-size:9.9px;line-height:9.9px;transform:scaleX(0.825)">21.98</div>
<div class="t" style="left:551.60px;top:53.84px;font-size:9.9px;line-height:9.9px;transform:scaleX(0.825)">Shipped</div>
<div class="t" style="left:633.80px;top:53.84px;font-size:9.9px;line-height:9.9px;transform:scaleX(0.825)">Averie Cain</div>
<div class="t" style="left:6.00px;top:70.56px;width:40px;text-align:center;font-size:9.8px;line-height:9.8px;transform-origin:50% 0;font-weight:bold;transform:scaleX(0.94);-webkit-text-stroke:0.1px currentColor">5</div>
<div class="t" style="left:57.00px;top:70.58px;font-size:9.9px;line-height:9.9px;transform:scaleX(0.825)">5</div>
<div class="t" style="left:139.30px;top:70.58px;font-size:9.9px;line-height:9.9px;transform:scaleX(0.825)">2021-01-19</div>
<div class="t" style="left:221.70px;top:70.58px;font-size:9.9px;line-height:9.9px;transform:scaleX(0.825)">prod_a969809e82f1</div>
<div class="t" style="left:304.20px;top:70.58px;font-size:9.9px;line-height:9.9px;transform:scaleX(0.825)">2</div>
<div class="t" style="left:386.70px;top:70.58px;font-size:9.9px;line-height:9.9px;transform:scaleX(0.825)">19.99</div>
<div class="t" style="left:469.20px;top:70.58px;font-size:9.9px;line-height:9.9px;transform:scaleX(0.825)">39.98</div>
<div class="t" style="left:551.60px;top:70.58px;font-size:9.9px;line-height:9.9px;transform:scaleX(0.825)">Outstanding</div>
<div class="t" style="left:633.80px;top:70.58px;font-size:9.9px;line-height:9.9px;transform:scaleX(0.825)">Deven Brennan</div>
<div class="t" style="left:6.00px;top:87.30px;width:40px;text-align:center;font-size:9.8px;line-height:9.8px;transform-origin:50% 0;font-weight:bold;transform:scaleX(0.94);-webkit-text-stroke:0.1px currentColor">6</div>
<div class="t" style="left:57.00px;top:87.32px;font-size:9.9px;line-height:9.9px;transform:scaleX(0.825)">6</div>
<div class="t" style="left:139.30px;top:87.32px;font-size:9.9px;line-height:9.9px;transform:scaleX(0.825)">2021-01-19</div>
<div class="t" style="left:221.70px;top:87.32px;font-size:9.9px;line-height:9.9px;transform:scaleX(0.825)">prod_a969809e82f1</div>
<div class="t" style="left:304.20px;top:87.32px;font-size:9.9px;line-height:9.9px;transform:scaleX(0.825)">2</div>
<div class="t" style="left:386.70px;top:87.32px;font-size:9.9px;line-height:9.9px;transform:scaleX(0.825)">19.99</div>
<div class="t" style="left:469.20px;top:87.32px;font-size:9.9px;line-height:9.9px;transform:scaleX(0.825)">39.98</div>
<div class="t" style="left:551.60px;top:87.32px;font-size:9.9px;line-height:9.9px;transform:scaleX(0.825)">Outstanding</div>
<div class="t" style="left:633.80px;top:87.32px;font-size:9.9px;line-height:9.9px;transform:scaleX(0.825)">Jairo Frey</div>
<div class="t" style="left:6.00px;top:104.04px;width:40px;text-align:center;font-size:9.8px;line-height:9.8px;transform-origin:50% 0;font-weight:bold;transform:scaleX(0.94);-webkit-text-stroke:0.1px currentColor">8</div>
<div class="t" style="left:57.00px;top:104.06px;font-size:9.9px;line-height:9.9px;transform:scaleX(0.825)">8</div>
<div class="t" style="left:139.30px;top:104.06px;font-size:9.9px;line-height:9.9px;transform:scaleX(0.825)">2021-01-19</div>
<div class="t" style="left:221.70px;top:104.06px;font-size:9.9px;line-height:9.9px;transform:scaleX(0.825)">prod_25f2d5b58b70</div>
<div class="t" style="left:304.20px;top:104.06px;font-size:9.9px;line-height:9.9px;transform:scaleX(0.825)">2</div>
<div class="t" style="left:386.70px;top:104.06px;font-size:9.9px;line-height:9.9px;transform:scaleX(0.825)">59.99</div>
<div class="t" style="left:469.20px;top:104.06px;font-size:9.9px;line-height:9.9px;transform:scaleX(0.825)">119.98</div>
<div class="t" style="left:551.60px;top:104.06px;font-size:9.9px;line-height:9.9px;transform:scaleX(0.825)">Shipped</div>
<div class="t" style="left:633.80px;top:104.06px;font-size:9.9px;line-height:9.9px;transform:scaleX(0.825)">Brenda Webb</div>
<div class="t" style="left:6.00px;top:120.78px;width:40px;text-align:center;font-size:9.8px;line-height:9.8px;transform-origin:50% 0;font-weight:bold;transform:scaleX(0.94);-webkit-text-stroke:0.1px currentColor">9</div>
<div class="t" style="left:57.00px;top:120.80px;font-size:9.9px;line-height:9.9px;transform:scaleX(0.825)">9</div>
<div class="t" style="left:139.30px;top:120.80px;font-size:9.9px;line-height:9.9px;transform:scaleX(0.825)">2021-01-19</div>
<div class="t" style="left:221.70px;top:120.80px;font-size:9.9px;line-height:9.9px;transform:scaleX(0.825)">prod_b8ce0a6940a1</div>
<div class="t" style="left:304.20px;top:120.80px;font-size:9.9px;line-height:9.9px;transform:scaleX(0.825)">1</div>
<div class="t" style="left:386.70px;top:120.80px;font-size:9.9px;line-height:9.9px;transform:scaleX(0.825)">20.99</div>
<div class="t" style="left:469.20px;top:120.80px;font-size:9.9px;line-height:9.9px;transform:scaleX(0.825)">20.99</div>
<div class="t" style="left:551.60px;top:120.80px;font-size:9.9px;line-height:9.9px;transform:scaleX(0.825)">Shipped</div>
<div class="t" style="left:633.80px;top:120.80px;font-size:9.9px;line-height:9.9px;transform:scaleX(0.825)">Jorge Harding</div>
<div class="t" style="left:6.00px;top:137.52px;width:40px;text-align:center;font-size:9.8px;line-height:9.8px;transform-origin:50% 0;font-weight:bold;transform:scaleX(0.94);-webkit-text-stroke:0.1px currentColor">10</div>
<div class="t" style="left:57.00px;top:137.54px;font-size:9.9px;line-height:9.9px;transform:scaleX(0.825)">10</div>
<div class="t" style="left:139.30px;top:137.54px;font-size:9.9px;line-height:9.9px;transform:scaleX(0.825)">2021-01-19</div>
<div class="t" style="left:221.70px;top:137.54px;font-size:9.9px;line-height:9.9px;transform:scaleX(0.825)">prod_25f2d5b58b70</div>
<div class="t" style="left:304.20px;top:137.54px;font-size:9.9px;line-height:9.9px;transform:scaleX(0.825)">1</div>
<div class="t" style="left:386.70px;top:137.54px;font-size:9.9px;line-height:9.9px;transform:scaleX(0.825)">59.99</div>
<div class="t" style="left:469.20px;top:137.54px;font-size:9.9px;line-height:9.9px;transform:scaleX(0.825)">59.99</div>
<div class="t" style="left:551.60px;top:137.54px;font-size:9.9px;line-height:9.9px;transform:scaleX(0.825)">Shipped</div>
<div class="t" style="left:633.80px;top:137.54px;font-size:9.9px;line-height:9.9px;transform:scaleX(0.825)">Janessa Benton</div>
<div class="t" style="left:6.00px;top:154.26px;width:40px;text-align:center;font-size:9.8px;line-height:9.8px;transform-origin:50% 0;font-weight:bold;transform:scaleX(0.94);-webkit-text-stroke:0.1px currentColor">11</div>
<div class="t" style="left:57.00px;top:154.28px;font-size:9.9px;line-height:9.9px;transform:scaleX(0.825)">11</div>
<div class="t" style="left:139.30px;top:154.28px;font-size:9.9px;line-height:9.9px;transform:scaleX(0.825)">2021-01-19</div>
<div class="t" style="left:221.70px;top:154.28px;font-size:9.9px;line-height:9.9px;transform:scaleX(0.825)">prod_9c88bd37f2f6</div>
<div class="t" style="left:304.20px;top:154.28px;font-size:9.9px;line-height:9.9px;transform:scaleX(0.825)">2</div>
<div class="t" style="left:386.70px;top:154.28px;font-size:9.9px;line-height:9.9px;transform:scaleX(0.825)">15.99</div>
<div class="t" style="left:469.20px;top:154.28px;font-size:9.9px;line-height:9.9px;transform:scaleX(0.825)">31.98</div>
<div class="t" style="left:551.60px;top:154.28px;font-size:9.9px;line-height:9.9px;transform:scaleX(0.825)">Shipped</div>
<div class="t" style="left:633.80px;top:154.28px;font-size:9.9px;line-height:9.9px;transform:scaleX(0.825)">Brenda Webb</div>
<div class="t" style="left:6.00px;top:171.00px;width:40px;text-align:center;font-size:9.8px;line-height:9.8px;transform-origin:50% 0;font-weight:bold;transform:scaleX(0.94);-webkit-text-stroke:0.1px currentColor">12</div>
<div class="t" style="left:57.00px;top:171.02px;font-size:9.9px;line-height:9.9px;transform:scaleX(0.825)">12</div>
<div class="t" style="left:139.30px;top:171.02px;font-size:9.9px;line-height:9.9px;transform:scaleX(0.825)">2021-01-19</div>
<div class="t" style="left:221.70px;top:171.02px;font-size:9.9px;line-height:9.9px;transform:scaleX(0.825)">prod_3b5cac1a5a91</div>
<div class="t" style="left:304.20px;top:171.02px;font-size:9.9px;line-height:9.9px;transform:scaleX(0.825)">2</div>
<div class="t" style="left:386.70px;top:171.02px;font-size:9.9px;line-height:9.9px;transform:scaleX(0.825)">9.99</div>
<div class="t" style="left:469.20px;top:171.02px;font-size:9.9px;line-height:9.9px;transform:scaleX(0.825)">19.98</div>
<div class="t" style="left:551.60px;top:171.02px;font-size:9.9px;line-height:9.9px;transform:scaleX(0.825)">Shipped</div>
<div class="t" style="left:633.80px;top:171.02px;font-size:9.9px;line-height:9.9px;transform:scaleX(0.825)">Grace Patterson</div>
<div class="t" style="left:6.00px;top:187.74px;width:40px;text-align:center;font-size:9.8px;line-height:9.8px;transform-origin:50% 0;font-weight:bold;transform:scaleX(0.94);-webkit-text-stroke:0.1px currentColor">13</div>
<div class="t" style="left:57.00px;top:187.76px;font-size:9.9px;line-height:9.9px;transform:scaleX(0.825)">13</div>
<div class="t" style="left:139.30px;top:187.76px;font-size:9.9px;line-height:9.9px;transform:scaleX(0.825)">2021-01-19</div>
<div class="t" style="left:221.70px;top:187.76px;font-size:9.9px;line-height:9.9px;transform:scaleX(0.825)">prod_47d0360d3ce6</div>
<div class="t" style="left:304.20px;top:187.76px;font-size:9.9px;line-height:9.9px;transform:scaleX(0.825)">1</div>
<div class="t" style="left:386.70px;top:187.76px;font-size:9.9px;line-height:9.9px;transform:scaleX(0.825)">10.99</div>
<div class="t" style="left:469.20px;top:187.76px;font-size:9.9px;line-height:9.9px;transform:scaleX(0.825)">10.99</div>
<div class="t" style="left:551.60px;top:187.76px;font-size:9.9px;line-height:9.9px;transform:scaleX(0.825)">Shipped</div>
<div class="t" style="left:633.80px;top:187.76px;font-size:9.9px;line-height:9.9px;transform:scaleX(0.825)">Janessa Benton</div>
<div class="t" style="left:6.00px;top:204.48px;width:40px;text-align:center;font-size:9.8px;line-height:9.8px;transform-origin:50% 0;font-weight:bold;transform:scaleX(0.94);-webkit-text-stroke:0.1px currentColor">14</div>
<div class="t" style="left:57.00px;top:204.50px;font-size:9.9px;line-height:9.9px;transform:scaleX(0.825)">14</div>
<div class="t" style="left:139.30px;top:204.50px;font-size:9.9px;line-height:9.9px;transform:scaleX(0.825)">2021-01-19</div>
<div class="t" style="left:221.70px;top:204.50px;font-size:9.9px;line-height:9.9px;transform:scaleX(0.825)">prod_a969809e82f1</div>
<div class="t" style="left:304.20px;top:204.50px;font-size:9.9px;line-height:9.9px;transform:scaleX(0.825)">2</div>
<div class="t" style="left:386.70px;top:204.50px;font-size:9.9px;line-height:9.9px;transform:scaleX(0.825)">19.99</div>
<div class="t" style="left:469.20px;top:204.50px;font-size:9.9px;line-height:9.9px;transform:scaleX(0.825)">39.98</div>
<div class="t" style="left:551.60px;top:204.50px;font-size:9.9px;line-height:9.9px;transform:scaleX(0.825)">Shipped</div>
<div class="t" style="left:633.80px;top:204.50px;font-size:9.9px;line-height:9.9px;transform:scaleX(0.825)">Jorge Harding</div>
<div class="t" style="left:6.00px;top:221.22px;width:40px;text-align:center;font-size:9.8px;line-height:9.8px;transform-origin:50% 0;font-weight:bold;transform:scaleX(0.94);-webkit-text-stroke:0.1px currentColor">16</div>
<div class="t" style="left:57.00px;top:221.24px;font-size:9.9px;line-height:9.9px;transform:scaleX(0.825)">16</div>
<div class="t" style="left:139.30px;top:221.24px;font-size:9.9px;line-height:9.9px;transform:scaleX(0.825)">2021-01-19</div>
<div class="t" style="left:221.70px;top:221.24px;font-size:9.9px;line-height:9.9px;transform:scaleX(0.825)">prod_b8ce0a6940a1</div>
<div class="t" style="left:304.20px;top:221.24px;font-size:9.9px;line-height:9.9px;transform:scaleX(0.825)">1</div>
<div class="t" style="left:386.70px;top:221.24px;font-size:9.9px;line-height:9.9px;transform:scaleX(0.825)">20.99</div>
<div class="t" style="left:469.20px;top:221.24px;font-size:9.9px;line-height:9.9px;transform:scaleX(0.825)">20.99</div>
<div class="t" style="left:551.60px;top:221.24px;font-size:9.9px;line-height:9.9px;transform:scaleX(0.825)">Shipped</div>
<div class="t" style="left:633.80px;top:221.24px;font-size:9.9px;line-height:9.9px;transform:scaleX(0.825)">Ashanti Robbins</div>
<div class="t" style="left:6.00px;top:237.96px;width:40px;text-align:center;font-size:9.8px;line-height:9.8px;transform-origin:50% 0;font-weight:bold;transform:scaleX(0.94);-webkit-text-stroke:0.1px currentColor">17</div>
<div class="t" style="left:57.00px;top:237.98px;font-size:9.9px;line-height:9.9px;transform:scaleX(0.825)">17</div>
<div class="t" style="left:139.30px;top:237.98px;font-size:9.9px;line-height:9.9px;transform:scaleX(0.825)">2021-01-19</div>
<div class="t" style="left:221.70px;top:237.98px;font-size:9.9px;line-height:9.9px;transform:scaleX(0.825)">prod_b8ce0a6940a1</div>
<div class="t" style="left:304.20px;top:237.98px;font-size:9.9px;line-height:9.9px;transform:scaleX(0.825)">1</div>
<div class="t" style="left:386.70px;top:237.98px;font-size:9.9px;line-height:9.9px;transform:scaleX(0.825)">20.99</div>
<div class="t" style="left:469.20px;top:237.98px;font-size:9.9px;line-height:9.9px;transform:scaleX(0.825)">20.99</div>
<div class="t" style="left:551.60px;top:237.98px;font-size:9.9px;line-height:9.9px;transform:scaleX(0.825)">Shipped</div>
<div class="t" style="left:633.80px;top:237.98px;font-size:9.9px;line-height:9.9px;transform:scaleX(0.825)">Brenda Webb</div>
<div class="t" style="left:6.00px;top:254.70px;width:40px;text-align:center;font-size:9.8px;line-height:9.8px;transform-origin:50% 0;font-weight:bold;transform:scaleX(0.94);-webkit-text-stroke:0.1px currentColor">18</div>
<div class="t" style="left:57.00px;top:254.72px;font-size:9.9px;line-height:9.9px;transform:scaleX(0.825)">18</div>
<div class="t" style="left:139.30px;top:254.72px;font-size:9.9px;line-height:9.9px;transform:scaleX(0.825)">2021-01-19</div>
<div class="t" style="left:221.70px;top:254.72px;font-size:9.9px;line-height:9.9px;transform:scaleX(0.825)">prod_9c88bd37f2f6</div>
<div class="t" style="left:304.20px;top:254.72px;font-size:9.9px;line-height:9.9px;transform:scaleX(0.825)">2</div>
<div class="t" style="left:386.70px;top:254.72px;font-size:9.9px;line-height:9.9px;transform:scaleX(0.825)">15.99</div>
<div class="t" style="left:469.20px;top:254.72px;font-size:9.9px;line-height:9.9px;transform:scaleX(0.825)">31.98</div>
<div class="t" style="left:551.60px;top:254.72px;font-size:9.9px;line-height:9.9px;transform:scaleX(0.825)">Shipped</div>
<div class="t" style="left:633.80px;top:254.72px;font-size:9.9px;line-height:9.9px;transform:scaleX(0.825)">Jorge Harding</div>
<div class="t" style="left:6.00px;top:271.44px;width:40px;text-align:center;font-size:9.8px;line-height:9.8px;transform-origin:50% 0;font-weight:bold;transform:scaleX(0.94);-webkit-text-stroke:0.1px currentColor">19</div>
<div class="t" style="left:57.00px;top:271.46px;font-size:9.9px;line-height:9.9px;transform:scaleX(0.825)">19</div>
<div class="t" style="left:139.30px;top:271.46px;font-size:9.9px;line-height:9.9px;transform:scaleX(0.825)">2021-01-19</div>
<div class="t" style="left:221.70px;top:271.46px;font-size:9.9px;line-height:9.9px;transform:scaleX(0.825)">prod_a969809e82f1</div>
<div class="t" style="left:304.20px;top:271.46px;font-size:9.9px;line-height:9.9px;transform:scaleX(0.825)">1</div>
<div class="t" style="left:386.70px;top:271.46px;font-size:9.9px;line-height:9.9px;transform:scaleX(0.825)">19.99</div>
<div class="t" style="left:469.20px;top:271.46px;font-size:9.9px;line-height:9.9px;transform:scaleX(0.825)">19.99</div>
<div class="t" style="left:551.60px;top:271.46px;font-size:9.9px;line-height:9.9px;transform:scaleX(0.825)">Shipped</div>
<div class="t" style="left:633.80px;top:271.46px;font-size:9.9px;line-height:9.9px;transform:scaleX(0.825)">Jairo Frey</div>
<div class="t" style="left:6.00px;top:288.18px;width:40px;text-align:center;font-size:9.8px;line-height:9.8px;transform-origin:50% 0;font-weight:bold;transform:scaleX(0.94);-webkit-text-stroke:0.1px currentColor">20</div>
<div class="t" style="left:57.00px;top:288.20px;font-size:9.9px;line-height:9.9px;transform:scaleX(0.825)">20</div>
<div class="t" style="left:139.30px;top:288.20px;font-size:9.9px;line-height:9.9px;transform:scaleX(0.825)">2021-01-19</div>
<div class="t" style="left:221.70px;top:288.20px;font-size:9.9px;line-height:9.9px;transform:scaleX(0.825)">prod_a969809e82f1</div>
<div class="t" style="left:304.20px;top:288.20px;font-size:9.9px;line-height:9.9px;transform:scaleX(0.825)">1</div>
<div class="t" style="left:386.70px;top:288.20px;font-size:9.9px;line-height:9.9px;transform:scaleX(0.825)">19.99</div>
<div class="t" style="left:469.20px;top:288.20px;font-size:9.9px;line-height:9.9px;transform:scaleX(0.825)">19.99</div>
<div class="t" style="left:551.60px;top:288.20px;font-size:9.9px;line-height:9.9px;transform:scaleX(0.825)">Shipped</div>
<div class="t" style="left:633.80px;top:288.20px;font-size:9.9px;line-height:9.9px;transform:scaleX(0.825)">Jorge Harding</div>
<div class="t" style="left:6.00px;top:304.92px;width:40px;text-align:center;font-size:9.8px;line-height:9.8px;transform-origin:50% 0;font-weight:bold;transform:scaleX(0.94);-webkit-text-stroke:0.1px currentColor">21</div>
<div class="t" style="left:57.00px;top:304.94px;font-size:9.9px;line-height:9.9px;transform:scaleX(0.825)">21</div>
<div class="t" style="left:139.30px;top:304.94px;font-size:9.9px;line-height:9.9px;transform:scaleX(0.825)">2021-01-19</div>
<div class="t" style="left:221.70px;top:304.94px;font-size:9.9px;line-height:9.9px;transform:scaleX(0.825)">prod_b044d1353a93</div>
<div class="t" style="left:304.20px;top:304.94px;font-size:9.9px;line-height:9.9px;transform:scaleX(0.825)">2</div>
<div class="t" style="left:386.70px;top:304.94px;font-size:9.9px;line-height:9.9px;transform:scaleX(0.825)">19.99</div>
<div class="t" style="left:469.20px;top:304.94px;font-size:9.9px;line-height:9.9px;transform:scaleX(0.825)">39.98</div>
<div class="t" style="left:551.60px;top:304.94px;font-size:9.9px;line-height:9.9px;transform:scaleX(0.825)">Shipped</div>
<div class="t" style="left:633.80px;top:304.94px;font-size:9.9px;line-height:9.9px;transform:scaleX(0.825)">Brenda Webb</div>
<div class="t" style="left:6.00px;top:321.66px;width:40px;text-align:center;font-size:9.8px;line-height:9.8px;transform-origin:50% 0;font-weight:bold;transform:scaleX(0.94);-webkit-text-stroke:0.1px currentColor">22</div>
<div class="t" style="left:57.00px;top:321.68px;font-size:9.9px;line-height:9.9px;transform:scaleX(0.825)">22</div>
<div class="t" style="left:139.30px;top:321.68px;font-size:9.9px;line-height:9.9px;transform:scaleX(0.825)">2021-01-19</div>
<div class="t" style="left:221.70px;top:321.68px;font-size:9.9px;line-height:9.9px;transform:scaleX(0.825)">prod_9c88bd37f2f6</div>
<div class="t" style="left:304.20px;top:321.68px;font-size:9.9px;line-height:9.9px;transform:scaleX(0.825)">2</div>
<div class="t" style="left:386.70px;top:321.68px;font-size:9.9px;line-height:9.9px;transform:scaleX(0.825)">15.99</div>
<div class="t" style="left:469.20px;top:321.68px;font-size:9.9px;line-height:9.9px;transform:scaleX(0.825)">31.98</div>
<div class="t" style="left:551.60px;top:321.68px;font-size:9.9px;line-height:9.9px;transform:scaleX(0.825)">Outstanding</div>
<div class="t" style="left:633.80px;top:321.68px;font-size:9.9px;line-height:9.9px;transform:scaleX(0.825)">Raphael Barrett</div>
<div class="t" style="left:6.00px;top:338.40px;width:40px;text-align:center;font-size:9.8px;line-height:9.8px;transform-origin:50% 0;font-weight:bold;transform:scaleX(0.94);-webkit-text-stroke:0.1px currentColor">24</div>
<div class="t" style="left:57.00px;top:338.42px;font-size:9.9px;line-height:9.9px;transform:scaleX(0.825)">24</div>
<div class="t" style="left:139.30px;top:338.42px;font-size:9.9px;line-height:9.9px;transform:scaleX(0.825)">2021-01-19</div>
<div class="t" style="left:221.70px;top:338.42px;font-size:9.9px;line-height:9.9px;transform:scaleX(0.825)">prod_9c88bd37f2f6</div>
<div class="t" style="left:304.20px;top:338.42px;font-size:9.9px;line-height:9.9px;transform:scaleX(0.825)">2</div>
<div class="t" style="left:386.70px;top:338.42px;font-size:9.9px;line-height:9.9px;transform:scaleX(0.825)">15.99</div>
<div class="t" style="left:469.20px;top:338.42px;font-size:9.9px;line-height:9.9px;transform:scaleX(0.825)">31.98</div>
<div class="t" style="left:551.60px;top:338.42px;font-size:9.9px;line-height:9.9px;transform:scaleX(0.825)">Outstanding</div>
<div class="t" style="left:633.80px;top:338.42px;font-size:9.9px;line-height:9.9px;transform:scaleX(0.825)">Deven Brennan</div>
<div class="t" style="left:6.00px;top:355.14px;width:40px;text-align:center;font-size:9.8px;line-height:9.8px;transform-origin:50% 0;font-weight:bold;transform:scaleX(0.94);-webkit-text-stroke:0.1px currentColor">26</div>
<div class="t" style="left:57.00px;top:355.16px;font-size:9.9px;line-height:9.9px;transform:scaleX(0.825)">26</div>
<div class="t" style="left:139.30px;top:355.16px;font-size:9.9px;line-height:9.9px;transform:scaleX(0.825)">2021-01-19</div>
<div class="t" style="left:221.70px;top:355.16px;font-size:9.9px;line-height:9.9px;transform:scaleX(0.825)">prod_a969809e82f1</div>
<div class="t" style="left:304.20px;top:355.16px;font-size:9.9px;line-height:9.9px;transform:scaleX(0.825)">1</div>
<div class="t" style="left:386.70px;top:355.16px;font-size:9.9px;line-height:9.9px;transform:scaleX(0.825)">19.99</div>
<div class="t" style="left:469.20px;top:355.16px;font-size:9.9px;line-height:9.9px;transform:scaleX(0.825)">19.99</div>
<div class="t" style="left:551.60px;top:355.16px;font-size:9.9px;line-height:9.9px;transform:scaleX(0.825)">Shipped</div>
<div class="t" style="left:633.80px;top:355.16px;font-size:9.9px;line-height:9.9px;transform:scaleX(0.825)">Deven Brennan</div>
</div>
<div class="a" style="left:96.50px;top:99.30px;width:1.00px;height:30.00px;background:#dcdce4"></div>
<div class="a" style="left:178.70px;top:99.30px;width:1.20px;height:395.00px;background:#c9c9d0"></div>
<div class="a" style="left:261.10px;top:99.30px;width:1.20px;height:395.00px;background:#c9c9d0"></div>
<div class="a" style="left:343.60px;top:99.30px;width:1.20px;height:395.00px;background:#c9c9d0"></div>
<div class="a" style="left:426.10px;top:99.30px;width:1.20px;height:395.00px;background:#c9c9d0"></div>
<div class="a" style="left:508.60px;top:99.30px;width:1.20px;height:395.00px;background:#c9c9d0"></div>
<div class="a" style="left:591.00px;top:99.30px;width:1.20px;height:395.00px;background:#c9c9d0"></div>
<div class="a" style="left:673.20px;top:99.30px;width:1.20px;height:395.00px;background:#c9c9d0"></div>
<div class="a" style="left:755.60px;top:99.30px;width:1.20px;height:395.00px;background:#c9c9d0"></div>
<div class="a" style="left:95.90px;top:129.30px;width:1.30px;height:365.00px;background:#c8c8ce"></div>
<div class="a" style="left:591.60px;top:99.30px;width:82.20px;height:30.00px;background:#cfbff8"></div>
<div class="a" style="left:591.10px;top:99.30px;width:83.20px;height:395.00px;border:1.2px solid #a98cf2;border-bottom:none"></div>
<div class="t" style="left:100.60px;top:104.88px;font-size:9px;line-height:9px;font-weight:bold;transform:scaleX(0.88)">order_id</div>
<svg class="a" style="left:161.40px;top:101.00px" width="10" height="10" viewBox="0 0 10 10"><path d="M0.6 0.6 H9.2 L5.6 5.5 V8.3 Q4.9 9.3 4.2 8.3 V5.5 Z" fill="none" stroke="#4a4a50" stroke-width="0.9" stroke-linejoin="round"/></svg>
<svg class="a" style="left:161.70px;top:117.00px" width="10.5" height="6.5" viewBox="0 0 10.5 6.5"><path d="M0.2 1.8 H10.2 M0.2 4.4 H10.2 M3.7 0 L3.1 6.3 M7.5 0 L6.9 6.3" stroke="#46464c" stroke-width="1.0" fill="none"/></svg>
<div class="t" style="left:182.90px;top:104.88px;font-size:9px;line-height:9px;font-weight:bold;transform:scaleX(0.88)">order_date</div>
<svg class="a" style="left:241.90px;top:101.00px" width="10" height="10" viewBox="0 0 10 10"><path d="M0.6 0.6 H9.2 L5.6 5.5 V8.3 Q4.9 9.3 4.2 8.3 V5.5 Z" fill="none" stroke="#4a4a50" stroke-width="0.9" stroke-linejoin="round"/></svg>
<div class="t" style="left:242.10px;top:118.45px;font-size:6.2px;line-height:6.2px;font-weight:bold;font-style:italic">Abc</div>
<div class="t" style="left:265.30px;top:104.88px;font-size:9px;line-height:9px;font-weight:bold;transform:scaleX(0.88)">product_id</div>
<svg class="a" style="left:324.40px;top:101.00px" width="10" height="10" viewBox="0 0 10 10"><path d="M0.6 0.6 H9.2 L5.6 5.5 V8.3 Q4.9 9.3 4.2 8.3 V5.5 Z" fill="none" stroke="#4a4a50" stroke-width="0.9" stroke-linejoin="round"/></svg>
<div class="t" style="left:324.60px;top:118.45px;font-size:6.2px;line-height:6.2px;font-weight:bold;font-style:italic">Abc</div>
<div class="t" style="left:347.80px;top:104.88px;font-size:9px;line-height:9px;font-weight:bold;transform:scaleX(0.88)">quantity_order</div>
<div class="t" style="left:347.80px;top:117.18px;font-size:9px;line-height:9px;font-weight:bold;transform:scaleX(0.88)">ed</div>
<svg class="a" style="left:408.80px;top:101.00px" width="10" height="10" viewBox="0 0 10 10"><path d="M0.6 0.6 H9.2 L5.6 5.5 V8.3 Q4.9 9.3 4.2 8.3 V5.5 Z" fill="none" stroke="#4a4a50" stroke-width="0.9" stroke-linejoin="round"/></svg>
<svg class="a" style="left:409.10px;top:117.00px" width="10.5" height="6.5" viewBox="0 0 10.5 6.5"><path d="M0.2 1.8 H10.2 M0.2 4.4 H10.2 M3.7 0 L3.1 6.3 M7.5 0 L6.9 6.3" stroke="#46464c" stroke-width="1.0" fill="none"/></svg>
<div class="t" style="left:430.30px;top:104.88px;font-size:9px;line-height:9px;font-weight:bold;transform:scaleX(0.88)">price_each</div>
<svg class="a" style="left:491.30px;top:101.00px" width="10" height="10" viewBox="0 0 10 10"><path d="M0.6 0.6 H9.2 L5.6 5.5 V8.3 Q4.9 9.3 4.2 8.3 V5.5 Z" fill="none" stroke="#4a4a50" stroke-width="0.9" stroke-linejoin="round"/></svg>
<svg class="a" style="left:491.60px;top:117.00px" width="10.5" height="6.5" viewBox="0 0 10.5 6.5"><path d="M0.2 1.8 H10.2 M0.2 4.4 H10.2 M3.7 0 L3.1 6.3 M7.5 0 L6.9 6.3" stroke="#46464c" stroke-width="1.0" fill="none"/></svg>
<div class="t" style="left:512.80px;top:104.88px;font-size:9px;line-height:9px;font-weight:bold;transform:scaleX(0.88)">total_revenue</div>
<svg class="a" style="left:573.70px;top:101.00px" width="10" height="10" viewBox="0 0 10 10"><path d="M0.6 0.6 H9.2 L5.6 5.5 V8.3 Q4.9 9.3 4.2 8.3 V5.5 Z" fill="none" stroke="#4a4a50" stroke-width="0.9" stroke-linejoin="round"/></svg>
<svg class="a" style="left:574.00px;top:117.00px" width="10.5" height="6.5" viewBox="0 0 10.5 6.5"><path d="M0.2 1.8 H10.2 M0.2 4.4 H10.2 M3.7 0 L3.1 6.3 M7.5 0 L6.9 6.3" stroke="#46464c" stroke-width="1.0" fill="none"/></svg>
<div class="t" style="left:595.20px;top:104.88px;font-size:9px;line-height:9px;font-weight:bold;transform:scaleX(0.88)">status</div>
<svg class="a" style="left:654.00px;top:101.00px" width="10" height="10" viewBox="0 0 10 10"><path d="M0.6 1 H9.4 L5.9 5.4 V8.6 Q5 9.6 4.1 8.6 V5.4 Z" fill="#9a6cf8" stroke="#9a6cf8" stroke-width="0.8" stroke-linejoin="round"/></svg>
<div class="t" style="left:654.20px;top:118.45px;font-size:6.2px;line-height:6.2px;font-weight:bold;font-style:italic">Abc</div>
<div class="t" style="left:677.40px;top:104.88px;font-size:9px;line-height:9px;font-weight:bold;transform:scaleX(0.88)">sales_person</div>
<svg class="a" style="left:736.40px;top:101.00px" width="10" height="10" viewBox="0 0 10 10"><path d="M0.6 0.6 H9.2 L5.6 5.5 V8.3 Q4.9 9.3 4.2 8.3 V5.5 Z" fill="none" stroke="#4a4a50" stroke-width="0.9" stroke-linejoin="round"/></svg>
<div class="t" style="left:736.60px;top:118.45px;font-size:6.2px;line-height:6.2px;font-weight:bold;font-style:italic">Abc</div>
<div class="a" style="left:788.20px;top:78.20px;width:288.30px;height:416.10px;background:#fff;border-left:1px solid #d2d2d8"></div>
<div class="t" style="left:795.60px;top:87.82px;font-size:12.5px;line-height:12.5px;font-weight:bold">status</div>
<svg class="a" style="left:1057.00px;top:85.00px" width="13" height="13" viewBox="0 0 13 13"><path d="M1.5 1.5 L11.5 11.5 M11.5 1.5 L1.5 11.5" stroke="#2a2a2e" stroke-width="1.7"/></svg>
<div class="t" style="left:795.60px;top:120.16px;font-size:12.8px;line-height:12.8px;font-weight:bold;transform:scaleX(0.975)">Unique Values</div>
<div class="a" style="left:956.20px;top:117.30px;width:113.50px;height:19.70px;background:#f3f3f3;border:1px solid #c8c8cc;border-radius:2px"></div>
<div class="t" style="left:959.60px;top:122.26px;font-size:9.5px;line-height:9.5px;transform:scaleX(0.925)">Ascending Value</div>
<div class="a" style="left:1050.00px;top:117.30px;width:19.70px;height:19.70px;background:#9a6cf8;border-radius:0 2px 2px 0"></div>
<svg class="a" style="left:1057.60px;top:125.60px" width="4.4" height="2.6" viewBox="0 0 4.4 2.6"><path d="M0 0 H4.4 L2.2 2.6 Z" fill="#fff"/></svg>
<div class="a" style="left:795.80px;top:140.20px;width:273.90px;height:19.40px;background:#f3f3f3;border:1px solid #c8c8cc;border-radius:2px"></div>
<div class="t" style="left:799.60px;top:145.16px;font-size:9.5px;line-height:9.5px;color:#b2b2b6;transform:scaleX(0.89)">Search</div>
<div class="a" style="left:795.80px;top:161.20px;width:273.90px;height:307.55px;background:#f7f7f7;border:1px solid #bcbcc2;border-radius:2px"></div>
<div class="a" style="left:810.20px;top:163.90px;width:9.20px;height:8.90px;background:#fff;border:1.2px solid #78787e;border-radius:1.5px"></div>
<div class="t" style="left:821.50px;top:163.99px;font-size:9.7px;line-height:9.7px;transform:scaleX(0.95)">Cancelled</div>
<div class="t" style="left:990.80px;top:163.99px;font-size:9.7px;line-height:9.7px;transform:scaleX(0.95)">544974 (21.43%)</div>
<div class="a" style="left:796.80px;top:174.60px;width:271.90px;height:13.30px;background:#e6e6f4"></div>
<svg class="a" style="left:810.20px;top:177.00px" width="9.3" height="9.3" viewBox="0 0 10 10"><rect x="0" y="0" width="10" height="10" rx="1.6" fill="#3d80f5"/><path d="M2.2 5.1 L4.2 7.2 L8 2.8" fill="none" stroke="#fff" stroke-width="1.45"/></svg>
<div class="t" style="left:821.50px;top:177.24px;font-size:9.7px;line-height:9.7px;transform:scaleX(0.95)">Outstanding</div>
<div class="t" style="left:990.80px;top:177.24px;font-size:9.7px;line-height:9.7px;transform:scaleX(0.95)">786997 (30.94%)</div>
<div class="a" style="left:796.80px;top:187.90px;width:271.90px;height:13.30px;background:#e6e6f4"></div>
<svg class="a" style="left:810.20px;top:190.30px" width="9.3" height="9.3" viewBox="0 0 10 10"><rect x="0" y="0" width="10" height="10" rx="1.6" fill="#3d80f5"/><path d="M2.2 5.1 L4.2 7.2 L8 2.8" fill="none" stroke="#fff" stroke-width="1.45"/></svg>
<div class="t" style="left:821.50px;top:190.49px;font-size:9.7px;line-height:9.7px;transform:scaleX(0.95)">Shipped</div>
<div class="t" style="left:990.80px;top:190.49px;font-size:9.7px;line-height:9.7px;transform:scaleX(0.95)">1211429 (47.63%)</div>
<div class="a" style="left:788.60px;top:473.90px;width:96.30px;height:20.30px;background:#e8e8f6"></div>
<div class="t" style="left:776.75px;top:479.16px;width:120px;text-align:center;font-size:9.5px;line-height:9.5px;transform-origin:50% 0;color:#303034;transform:scaleX(1.03)">Filter/Sort</div>
<div class="a" style="left:884.90px;top:473.90px;width:95.40px;height:20.30px;background:#9a6cf8"></div>
<div class="t" style="left:872.60px;top:479.16px;width:120px;text-align:center;font-size:9.5px;line-height:9.5px;transform-origin:50% 0;color:#fff">Values</div>
<div class="a" style="left:980.30px;top:473.90px;width:96.20px;height:20.30px;background:#e8e8f6"></div>
<div class="t" style="left:968.40px;top:479.16px;width:120px;text-align:center;font-size:9.5px;line-height:9.5px;transform-origin:50% 0;color:#303034;transform:scaleX(0.985)">Summary Stats</div>
<div class="a" style="left:44.00px;top:494.20px;width:1032.50px;height:21.00px;background:#e8e8f6"></div>
<div class="a" style="left:44.00px;top:494.00px;width:1032.50px;height:0.80px;background:#d6d6de"></div>
<div class="a" style="left:44.00px;top:494.80px;width:23.20px;height:20.40px;background:#cbbaf8"></div>
<svg class="a" style="left:49.00px;top:499.80px" width="11" height="10" viewBox="0 0 11 10"><path d="M5.4 0.3 V9.7 M0.4 5 H10.4" stroke="#333" stroke-width="1.5"/></svg>
<div class="a" style="left:67.20px;top:494.80px;width:62.80px;height:20.40px;background:#9a6cf8"></div>
<div class="t" style="left:74.00px;top:499.54px;font-size:10px;line-height:10px;color:#fff;transform:scaleX(0.9)">sales_csv</div>
<svg class="a" style="left:117.50px;top:503.80px" width="6" height="4" viewBox="0 0 6 4"><path d="M0.7 0.7 L3 3 L5.3 0.7" fill="none" stroke="#fff" stroke-width="1.4"/></svg>
<div class="a" style="left:974.20px;top:494.80px;width:1.00px;height:20.40px;background:#cfcfd6"></div>
<div class="t" style="left:977.80px;top:499.56px;font-size:9.5px;line-height:9.5px;transform:scaleX(0.99)">(1998426 rows, 8 cols)</div></div></body></html>
